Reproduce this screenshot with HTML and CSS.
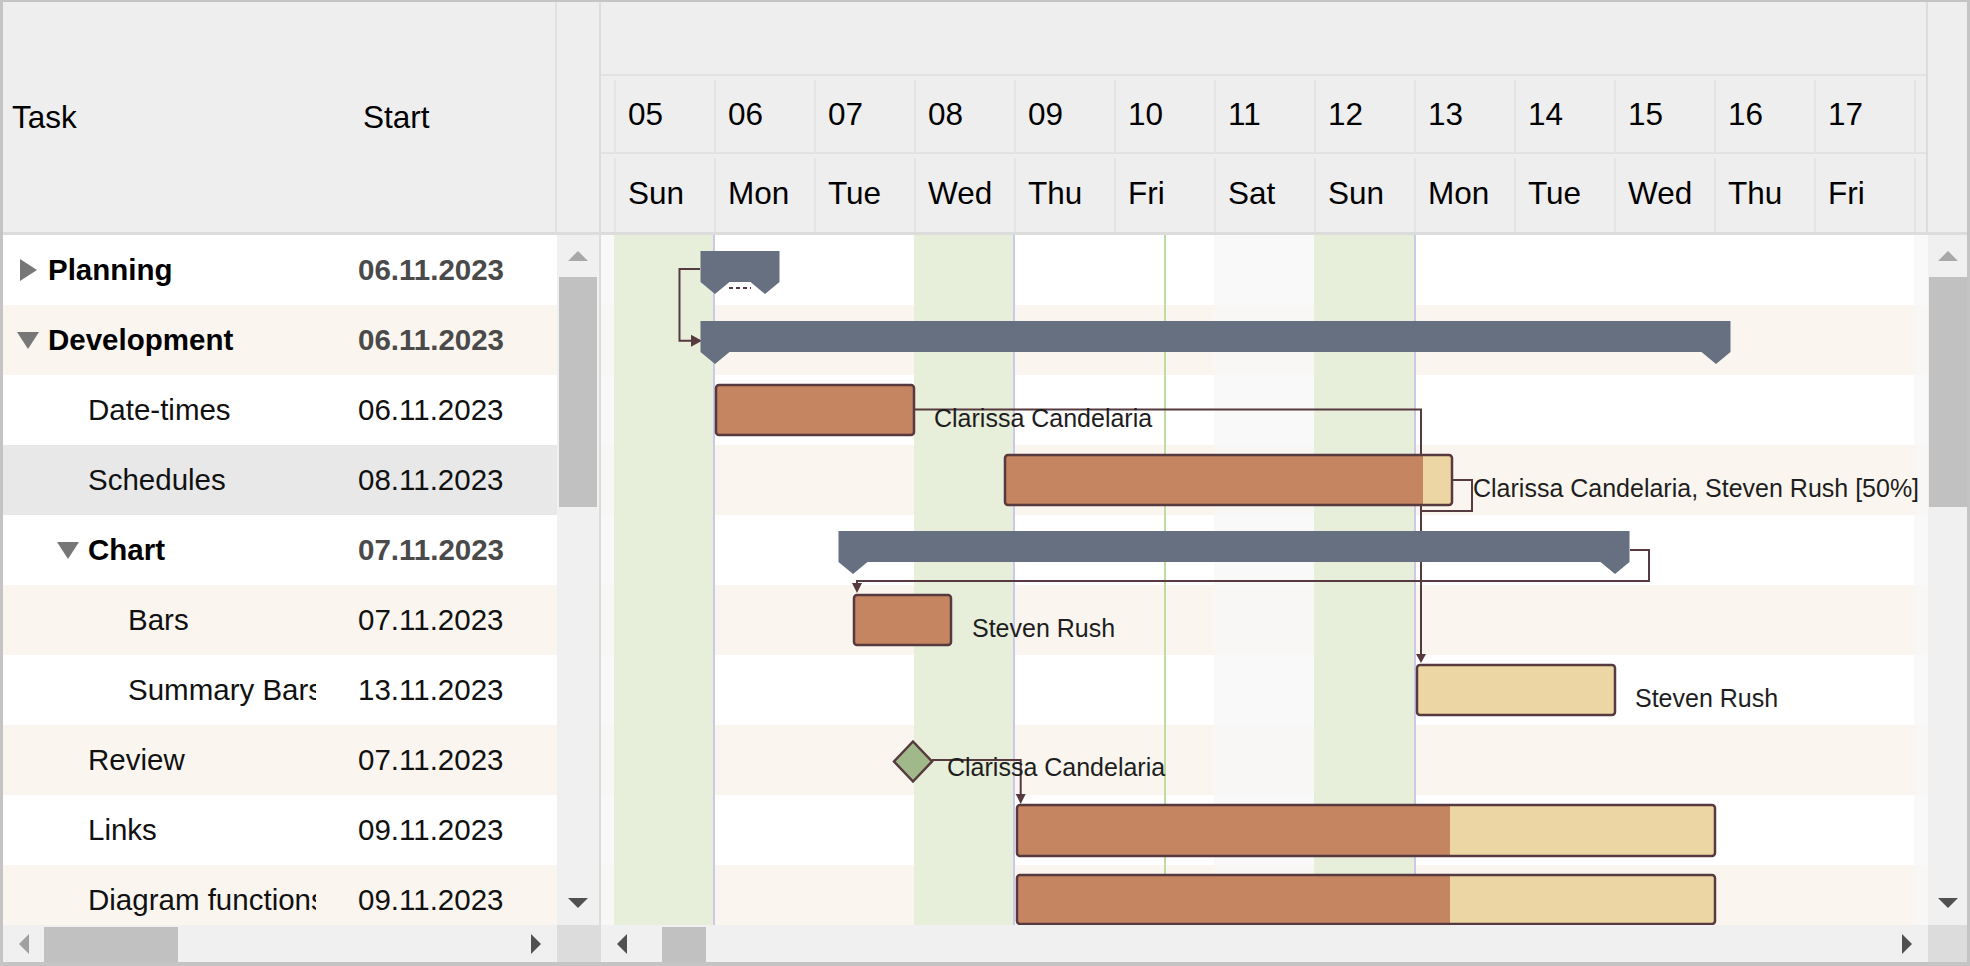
FILE: index.html
```html
<!DOCTYPE html>
<html>
<head>
<meta charset="utf-8">
<link rel="stylesheet" href="styles.css">
</head>
<body>
<div class="frame">
  <div class="head">
    <div class="gh">
      <div class="gh-task">Task</div>
      <div class="gh-start">Start</div>
    </div>
    <div class="sh"></div>
    <div class="ch">
      <div class="ch-top"></div>
      <div class="ch-row ch-num">
        <div class="dc part-l"></div>
        <div class="dc">05</div><div class="dc">06</div><div class="dc">07</div><div class="dc">08</div><div class="dc">09</div><div class="dc">10</div><div class="dc">11</div><div class="dc">12</div><div class="dc">13</div><div class="dc">14</div><div class="dc">15</div><div class="dc">16</div><div class="dc">17</div>
        <div class="dc part-r"></div>
      </div>
      <div class="ch-row ch-name">
        <div class="dc part-l"></div>
        <div class="dc">Sun</div><div class="dc">Mon</div><div class="dc">Tue</div><div class="dc">Wed</div><div class="dc">Thu</div><div class="dc">Fri</div><div class="dc">Sat</div><div class="dc">Sun</div><div class="dc">Mon</div><div class="dc">Tue</div><div class="dc">Wed</div><div class="dc">Thu</div><div class="dc">Fri</div>
        <div class="dc part-r"></div>
      </div>
    </div>
    <div class="sh2"></div>
  </div>

  <div class="main">
    <div class="grid">
      <div class="row"><div class="c-task l0"><span class="tg closed"></span><span class="tn b">Planning</span></div><div class="c-start b">06.11.2023</div></div>
      <div class="row alt"><div class="c-task l0"><span class="tg open"></span><span class="tn b">Development</span></div><div class="c-start b">06.11.2023</div></div>
      <div class="row"><div class="c-task l1"><span class="tg"></span><span class="tn">Date-times</span></div><div class="c-start">06.11.2023</div></div>
      <div class="row sel"><div class="c-task l1"><span class="tg"></span><span class="tn">Schedules</span></div><div class="c-start">08.11.2023</div></div>
      <div class="row"><div class="c-task l1"><span class="tg open"></span><span class="tn b">Chart</span></div><div class="c-start b">07.11.2023</div></div>
      <div class="row alt"><div class="c-task l2"><span class="tg"></span><span class="tn">Bars</span></div><div class="c-start">07.11.2023</div></div>
      <div class="row"><div class="c-task l2"><span class="tg"></span><span class="tn">Summary Bars</span></div><div class="c-start">13.11.2023</div></div>
      <div class="row alt"><div class="c-task l1"><span class="tg"></span><span class="tn">Review</span></div><div class="c-start">07.11.2023</div></div>
      <div class="row"><div class="c-task l1"><span class="tg"></span><span class="tn">Links</span></div><div class="c-start">09.11.2023</div></div>
      <div class="row alt"><div class="c-task l1"><span class="tg"></span><span class="tn">Diagram functions</span></div><div class="c-start">09.11.2023</div></div>
    </div>

    <div class="vs">
      <div class="btn up"><span class="tri-up dis"></span></div>
      <div class="thumb"></div>
      <div class="fill"></div>
      <div class="btn down"><span class="tri-down"></span></div>
    </div>

    <div class="chart">
      <div class="crow"></div>
      <div class="crow alt"></div>
      <div class="crow"></div>
      <div class="crow alt"></div>
      <div class="crow"></div>
      <div class="crow alt"></div>
      <div class="crow"></div>
      <div class="crow alt"></div>
      <div class="crow"></div>
      <div class="crow alt"></div>
      <svg class="canvas" width="1327" height="690" viewBox="0 0 1327 690">
        <rect class="sat" x="0" y="0" width="13" height="690"/>
        <rect class="wk" x="13" y="0" width="100" height="690"/>
        <rect class="wk" x="313" y="0" width="100" height="690"/>
        <rect class="sat" x="613" y="0" width="100" height="690"/>
        <rect class="wk" x="713" y="0" width="100" height="690"/>
        <rect class="sat" x="1313" y="0" width="14" height="690"/>
        <rect class="lav" x="112" y="0" width="2" height="690"/>
        <rect class="lav" x="412" y="0" width="2" height="690"/>
        <rect class="lav" x="813" y="0" width="2" height="690"/>
        <rect class="today" x="563" y="0" width="2" height="690"/>

        <path class="lnk" d="M99 34 H78.5 V105.7 H92"/>
        <polygon class="arr" points="90,99.7 101,105.7 90,111.7"/>
        <path class="lnk" d="M313 174.5 H820 V420"/>
        <polygon class="arr" points="815,419 825,419 820,428"/>
        <path class="lnk" d="M851 245 H871 V276 H820"/>
        <path class="lnk" d="M1029 315 H1048 V346 H256 V350"/>
        <polygon class="arr" points="251,348 261,348 256,358"/>
        <path class="lnk" d="M331 525 H419.7 V560"/>
        <polygon class="arr" points="414.7,559 424.7,559 419.7,569"/>

        <polygon class="sum" points="99.5,16 178.5,16 178.5,47 164,59 149.5,47 128.5,47 114,59 99.5,47"/>
        <line class="dash" x1="128" y1="53" x2="150" y2="53"/>
        <polygon class="sum" points="99.5,86 1129.5,86 1129.5,117 1115,129 1100.5,117 128.5,117 114,129 99.5,117"/>
        <polygon class="sum" points="237.5,296 1028.5,296 1028.5,327 1014,339 999.5,327 266.5,327 252,339 237.5,327"/>

        <rect class="done" x="115" y="150" width="198" height="50"/>
        <rect class="outline" x="115" y="150" width="198" height="50" rx="3"/>
        <text class="lbl" x="333" y="192">Clarissa Candelaria</text>

        <rect class="todo" x="404" y="220" width="447" height="50"/>
        <rect class="done" x="404" y="220" width="418" height="50"/>
        <rect class="outline" x="404" y="220" width="447" height="50" rx="3"/>
        <text class="lbl" x="872" y="262">Clarissa Candelaria, Steven Rush [50%]</text>

        <rect class="done" x="253" y="360" width="97" height="50"/>
        <rect class="outline" x="253" y="360" width="97" height="50" rx="3"/>
        <text class="lbl" x="371" y="402">Steven Rush</text>

        <rect class="todo" x="816" y="430" width="198" height="50"/>
        <rect class="outline" x="816" y="430" width="198" height="50" rx="3"/>
        <text class="lbl" x="1034" y="472">Steven Rush</text>

        <polygon class="ms" points="312,506.5 331,526.5 312,546.5 293,526.5"/>
        <text class="lbl" x="346" y="541">Clarissa Candelaria</text>

        <rect class="todo" x="416" y="570" width="698" height="51"/>
        <rect class="done" x="416" y="570" width="433" height="51"/>
        <rect class="outline" x="416" y="570" width="698" height="51" rx="3"/>

        <rect class="todo" x="416" y="640" width="698" height="49"/>
        <rect class="done" x="416" y="640" width="433" height="49"/>
        <rect class="outline" x="416" y="640" width="698" height="49" rx="3"/>
      </svg>
    </div>

    <div class="vs vs2">
      <div class="btn up"><span class="tri-up dis"></span></div>
      <div class="thumb"></div>
      <div class="fill"></div>
      <div class="btn down"><span class="tri-down"></span></div>
    </div>
  </div>

  <div class="hs">
    <div class="hs-grid">
      <div class="hb l"><span class="tri-left dis"></span></div>
      <div class="hthumb t1"></div>
      <div class="fill"></div>
      <div class="hb r"><span class="tri-right"></span></div>
    </div>
    <div class="corner"></div>
    <div class="hs-chart">
      <div class="hb l2"><span class="tri-left"></span></div>
      <div class="hthumb t2"></div>
      <div class="fill"></div>
      <div class="hb r2"><span class="tri-right"></span></div>
    </div>
    <div class="corner corner2"></div>
  </div>
</div>
</body>
</html>
```

FILE: styles.css
```css
html, body {
  margin: 0;
  padding: 0;
  background: #fff;
}

.frame {
  width: 1970px;
  height: 966px;
  box-sizing: border-box;
  border-style: solid;
  border-color: #c4c4c4;
  border-width: 2px 3px 4px 3px;
  display: flex;
  flex-direction: column;
  overflow: hidden;
  font-family: "Liberation Sans", Arial, sans-serif;
  color: #000;
}

/* ---------- header ---------- */
.head {
  height: 233px;
  flex: none;
  box-sizing: border-box;
  border-bottom: 3px solid #dcdcdc;
  background: #eeeeee;
  display: flex;
}

.gh {
  width: 554px;
  flex: none;
  box-sizing: border-box;
  border-right: 2px solid #e0e0e0;
  display: flex;
  align-items: center;
  font-size: 31.5px;
}

.gh-task {
  width: 360px;
  box-sizing: border-box;
  padding-left: 9px;
}

.sh {
  width: 44px;
  flex: none;
  box-sizing: border-box;
  border-right: 2px solid #dcdcdc;
}

.ch {
  width: 1327px;
  flex: none;
  box-sizing: border-box;
  border-right: 2px solid #dcdcdc;
  display: flex;
  flex-direction: column;
}

.ch-top {
  height: 72px;
  border-bottom: 2px solid #e2e2e2;
}

.ch-row {
  display: flex;
  font-size: 31.5px;
}

.ch-num {
  height: 76px;
  border-bottom: 2px solid #e2e2e2;
}

.ch-name {
  height: 78px;
}

.dc {
  width: 100px;
  flex: none;
  box-sizing: border-box;
  border-left: 2px solid #e4e4e4;
  margin-top: 4px;
  padding: 0 0 4px 12px;
  display: flex;
  align-items: center;
}

.dc.part-l {
  width: 13px;
  border-left: none;
  padding: 0;
}

.dc.part-r {
  width: 12px;
  padding: 0;
}

.sh2 {
  flex: 1;
}

/* ---------- body ---------- */
.main {
  height: 690px;
  flex: none;
  display: flex;
  overflow: hidden;
}

.grid {
  width: 554px;
  flex: none;
  overflow: hidden;
  font-size: 29.5px;
}

.row {
  height: 70px;
  display: flex;
  align-items: center;
  background: #fff;
}

.row.alt {
  background: #faf6ef;
}

.row.sel {
  background: #e8e8e8;
}

.c-task {
  width: 313px;
  flex: none;
  box-sizing: border-box;
  overflow: hidden;
  display: flex;
  align-items: center;
  color: #111;
}

.c-task.l0 { padding-left: 14px; }
.c-task.l1 { padding-left: 54px; }
.c-task.l2 { padding-left: 94px; }

.tg {
  width: 22px;
  height: 22px;
  flex: none;
  margin-right: 9px;
  display: flex;
  align-items: center;
  justify-content: center;
}

.tg.closed::before {
  content: "";
  width: 0;
  height: 0;
  border-top: 11px solid transparent;
  border-bottom: 11px solid transparent;
  border-left: 17px solid #777;
}

.tg.open::before {
  content: "";
  width: 0;
  height: 0;
  border-left: 11px solid transparent;
  border-right: 11px solid transparent;
  border-top: 17px solid #777;
}

.tn {
  white-space: nowrap;
  flex: none;
}

.tn.b {
  font-weight: bold;
  color: #000;
}

.c-start {
  padding-left: 42px;
  color: #111;
  white-space: nowrap;
}

.c-start.b {
  font-weight: bold;
  color: #4a4a4a;
}

/* ---------- vertical scrollbars ---------- */
.vs {
  width: 44px;
  flex: none;
  box-sizing: border-box;
  border-right: 2px solid #dcdcdc;
  background: #f0f0f0;
  display: flex;
  flex-direction: column;
}

.vs .btn {
  height: 42px;
  flex: none;
  display: flex;
  align-items: center;
  justify-content: center;
}

.vs .btn.down {
  height: 44px;
}

.vs .thumb {
  height: 230px;
  flex: none;
  margin: 0 2px;
  background: #c1c1c1;
}

.fill {
  flex: 1;
}

.vs2 {
  width: 39px;
  border-right: none;
}

.vs2 .thumb {
  margin: 0 0 0 1px;
}

.tri-up {
  width: 0;
  height: 0;
  border-left: 10px solid transparent;
  border-right: 10px solid transparent;
  border-bottom: 10px solid #505050;
}

.tri-down {
  width: 0;
  height: 0;
  border-left: 10px solid transparent;
  border-right: 10px solid transparent;
  border-top: 10px solid #505050;
}

.tri-left {
  width: 0;
  height: 0;
  border-top: 10px solid transparent;
  border-bottom: 10px solid transparent;
  border-right: 10px solid #505050;
}

.tri-right {
  width: 0;
  height: 0;
  border-top: 10px solid transparent;
  border-bottom: 10px solid transparent;
  border-left: 10px solid #505050;
}

.tri-up.dis { border-bottom-color: #a8a8a8; }
.tri-left.dis { border-right-color: #a0a0a0; }

/* ---------- chart ---------- */
.chart {
  width: 1327px;
  flex: none;
  position: relative;
  overflow: hidden;
}

.crow {
  height: 70px;
  background: #fff;
}

.crow.alt {
  background: #faf6ef;
}

.canvas {
  position: absolute;
  left: 0;
  top: 0;
}

.wk { fill: #e7eed9; }
.sat { fill: #f7f7f7; fill-opacity: 0.8; }
.lav { fill: #cbc8e8; }
.today { fill: #bcdca0; }

.lnk {
  fill: none;
  stroke: #573a3f;
  stroke-width: 2;
}

.arr { fill: #573a3f; }

.sum { fill: #667080; }

.dash {
  stroke: #573a3f;
  stroke-width: 2;
  stroke-dasharray: 4 3;
}

.done { fill: #c58561; }
.todo { fill: #ecd7a4; }

.outline {
  fill: none;
  stroke: #573a3f;
  stroke-width: 2.5;
}

.ms {
  fill: #a1b98a;
  stroke: #573a3f;
  stroke-width: 2.5;
}

.lbl {
  font-family: "Liberation Sans", Arial, sans-serif;
  font-size: 25px;
  fill: #1e1e1e;
}

/* ---------- horizontal scrollbar ---------- */
.hs {
  height: 37px;
  flex: none;
  display: flex;
  background: #f0f0f0;
}

.hs-grid {
  width: 554px;
  flex: none;
  display: flex;
}

.hs-chart {
  width: 1327px;
  flex: none;
  display: flex;
}

.hb {
  flex: none;
  display: flex;
  align-items: center;
  justify-content: center;
}

.hb.l { width: 41px; }
.hb.r { width: 42px; }
.hb.l2 { width: 42px; }
.hb.r2 { width: 43px; }

.hthumb {
  flex: none;
  margin-top: 2px;
  background: #c1c1c1;
}

.hthumb.t1 { width: 134px; }
.hthumb.t2 { width: 44px; margin-left: 19px; }

.corner {
  width: 44px;
  flex: none;
  background: #dcdcdc;
}

.corner2 {
  width: auto;
  flex: 1;
}
```
